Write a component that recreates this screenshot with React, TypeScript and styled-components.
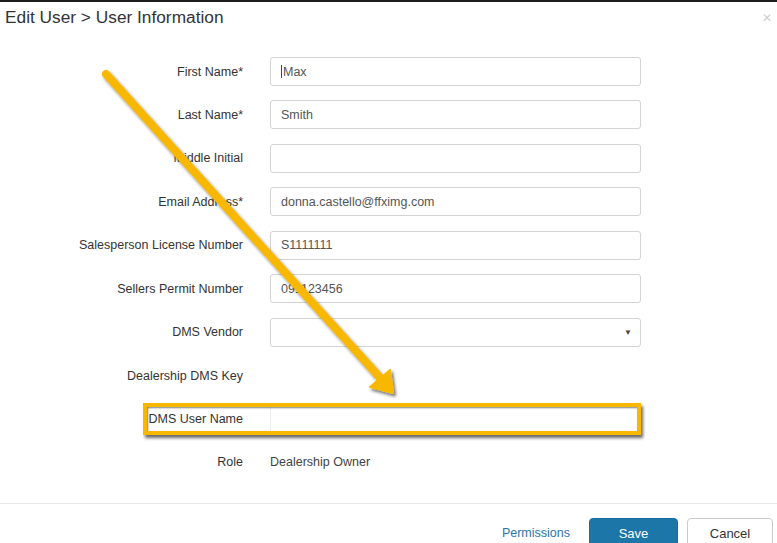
import React from 'react';
import styled, { createGlobalStyle } from 'styled-components';

const GlobalStyle = createGlobalStyle`
  html, body {
    margin: 0;
    padding: 0;
    background: #fff;
  }
  body {
    font-family: "Liberation Sans", Arial, sans-serif;
    color: #333;
  }
`;

const Modal = styled.div`
  position: relative;
  width: 777px;
  height: 543px;
  overflow: hidden;
  border-top: 2px solid #1c1c1c;
  box-sizing: border-box;
`;

const Header = styled.header`
  display: flex;
  align-items: center;
  justify-content: space-between;
  height: 31px;
  padding: 0 5px 0 5px;
`;

const Title = styled.h1`
  margin: 0;
  font-size: 17.3px;
  font-weight: normal;
  color: #333;
`;

const Close = styled.span`
  font-size: 12px;
  color: #cfcfcf;
  line-height: 1;
`;

const Form = styled.div`
  display: grid;
  grid-template-columns: 243px 371px;
  grid-auto-rows: 29px;
  column-gap: 27px;
  row-gap: 14.44px;
  padding-top: 24px;
  height: 470px;
  align-content: start;
  box-sizing: border-box;
`;

const Row = styled.div`
  display: contents;
`;

const Label = styled.label`
  display: flex;
  align-items: center;
  justify-content: flex-end;
  height: 29px;
  font-size: 12.5px;
  color: #333;
  white-space: nowrap;
`;

const Input = styled.div<{ $faint?: boolean }>`
  display: flex;
  align-items: center;
  justify-content: space-between;
  height: 29px;
  box-sizing: border-box;
  padding: 0 8px 0 10px;
  border: 1px solid ${p => (p.$faint ? '#eee' : '#d4d4d4')};
  border-radius: 3px;
  font-size: 12.5px;
  color: #555;
  background: #fff;
`;

const Caret = styled.span`
  font-size: 8px;
  color: #444;
`;

const Cursor = styled.span`
  display: inline-block;
  width: 1px;
  height: 13px;
  background: #444;
  margin-right: 1px;
  vertical-align: -2px;
`;

const Value = styled.div`
  display: flex;
  align-items: center;
  height: 29px;
  font-size: 12.5px;
  color: #444;
`;

const HighlightRow = styled.div`
  position: relative;
  grid-column: 1 / span 2;
  display: grid;
  grid-template-columns: 243px 371px;
  column-gap: 27px;
`;

const Highlight = styled.div`
  position: absolute;
  left: 143px;
  right: 0;
  top: -2px;
  bottom: -1px;
  border: 4px solid #f8b800;
  box-shadow: 2px 3px 3px rgba(0, 0, 0, 0.6), inset 1px 1px 2px rgba(0, 0, 0, 0.5);
  pointer-events: none;
`;

const Footer = styled.footer`
  display: flex;
  align-items: flex-start;
  justify-content: flex-end;
  gap: 9px;
  padding: 14px 4px 0 0;
  border-top: 1px solid #e8e8e8;
  height: 40px;
`;

const LinkButton = styled.span`
  font-size: 12.5px;
  color: #2a76aa;
  padding: 8px 10px 0 0;
`;

const Button = styled.button<{ $primary?: boolean }>`
  height: 34px;
  border-radius: 4px;
  font-family: inherit;
  font-size: 13px;
  padding: 0 0 4px;
  border: 1px solid ${p => (p.$primary ? '#1a6c9c' : '#ccc')};
  background: ${p => (p.$primary ? '#1c76a8' : '#fff')};
  color: ${p => (p.$primary ? '#fff' : '#333')};
  width: ${p => (p.$primary ? '89px' : '86px')};
`;

const ArrowLayer = styled.svg`
  position: absolute;
  left: 0;
  top: 0;
  pointer-events: none;
`;

type Field = { label: string; value?: string; kind: 'input' | 'select' | 'none' };

const fields: Field[] = [
  { label: 'First Name*', value: 'Max', kind: 'input' },
  { label: 'Last Name*', value: 'Smith', kind: 'input' },
  { label: 'Middle Initial', value: '', kind: 'input' },
  { label: 'Email Address*', value: 'donna.castello@ffximg.com', kind: 'input' },
  { label: 'Salesperson License Number', value: 'S1111111', kind: 'input' },
  { label: 'Sellers Permit Number', value: '091123456', kind: 'input' },
  { label: 'DMS Vendor', value: '', kind: 'select' },
  { label: 'Dealership DMS Key', kind: 'none' },
];

function Arrow() {
  return (
    <ArrowLayer width="777" height="543" viewBox="0 0 777 543">
      <defs>
        <filter id="shadow" x="-10%" y="-10%" width="130%" height="130%">
          <feDropShadow dx="2" dy="2.5" stdDeviation="1.5" floodColor="#000" floodOpacity="0.55" />
        </filter>
      </defs>
      <g filter="url(#shadow)">
        <line x1="106" y1="72" x2="383" y2="379" stroke="#f8b800" strokeWidth="8" strokeLinecap="round" />
        <polygon points="393,391 390,368 370,385" fill="#f8b800" stroke="#f8b800" strokeWidth="2" strokeLinejoin="round" />
      </g>
    </ArrowLayer>
  );
}

export default function App() {
  return (
    <>
      <GlobalStyle />
      <Modal>
        <Header>
          <Title>Edit User &gt; User Information</Title>
          <Close>✕</Close>
        </Header>
        <Form>
          {fields.map(f => (
            <Row key={f.label}>
              <Label>{f.label}</Label>
              {f.kind === 'input' && (
                <Input>
                  <span>
                    {f.label === 'First Name*' && <Cursor />}
                    {f.value}
                  </span>
                </Input>
              )}
              {f.kind === 'select' && (
                <Input>
                  <span />
                  <Caret>▼</Caret>
                </Input>
              )}
              {f.kind === 'none' && <span />}
            </Row>
          ))}
          <HighlightRow>
            <Label>DMS User Name</Label>
            <Input $faint />
            <Highlight />
          </HighlightRow>
          <Row>
            <Label>Role</Label>
            <Value>Dealership Owner</Value>
          </Row>
        </Form>
        <Footer>
          <LinkButton>Permissions</LinkButton>
          <Button $primary>Save</Button>
          <Button>Cancel</Button>
        </Footer>
        <Arrow />
      </Modal>
    </>
  );
}
